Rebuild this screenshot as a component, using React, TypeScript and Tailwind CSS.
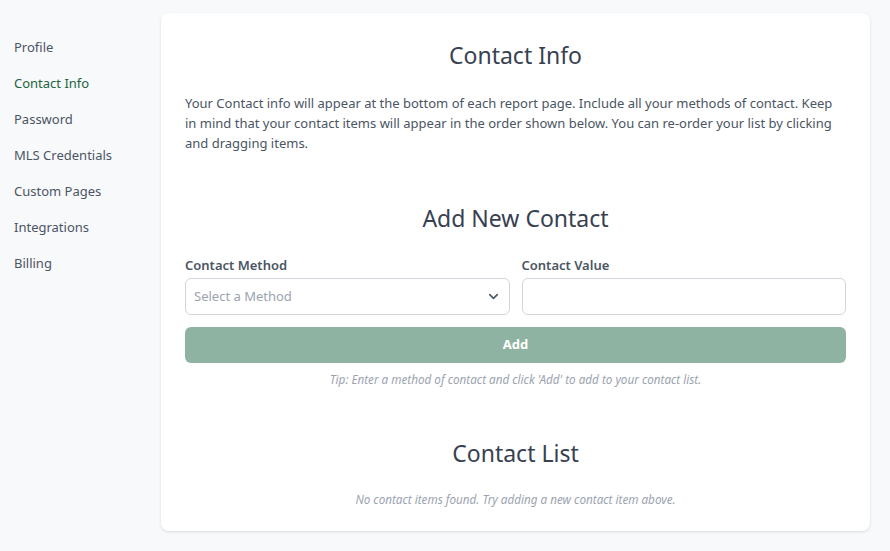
import { ChevronDown } from 'lucide-react';

const navItems = ['Profile', 'Contact Info', 'Password', 'MLS Credentials', 'Custom Pages', 'Integrations', 'Billing'];

const App = () => {
  return (
    <div className="min-h-[551px] bg-[#f8f9fb] flex font-['Noto_Sans',sans-serif] text-[#374151]">
      <aside className="w-[161px] shrink-0 pt-[30px] pl-[14px]">
        <ul className="flex flex-col">
          {navItems.map((item) => (
            <li key={item} className={`h-9 flex items-center text-[13px] ${item === 'Contact Info' ? 'text-[#23633f]' : 'text-[#4b5563]'}`}>
              {item}
            </li>
          ))}
        </ul>
      </aside>

      <main className="mt-[13px] mb-[20px] w-[709px] bg-white rounded-lg shadow-[0_1px_3px_rgba(0,0,0,0.12)] px-6 pt-[26px] pb-[17px]">
        <h1 className="text-center text-[23px] text-[#374151] leading-8">Contact Info</h1>
        <p className="mt-[22px] text-[13px] leading-5 text-[#4b5563]">
          Your Contact info will appear at the bottom of each report page. Include all your methods of contact. Keep in mind that your contact items will appear in the order shown below. You can re-order your list by clicking and dragging items.
        </p>

        <h2 className="mt-[49px] text-center text-[23px] text-[#374151] leading-8">Add New Contact</h2>
        <div className="mt-[21px] grid grid-cols-2 gap-3">
          <div>
            <label className="block text-[13px] font-semibold text-[#4b5563] leading-5 mb-[3px]">Contact Method</label>
            <div className="h-[37px] border border-[#d1d5db] rounded-md flex items-center justify-between px-2 text-[13px] text-[#9ca3af]">
              <span>Select a Method</span>
              <ChevronDown size={15} strokeWidth={2.5} className="text-[#4b5563]" />
            </div>
          </div>
          <div>
            <label className="block text-[13px] font-semibold text-[#4b5563] leading-5 mb-[3px]">Contact Value</label>
            <div className="h-[37px] border border-[#d1d5db] rounded-md" />
          </div>
        </div>
        <button className="mt-[12px] w-full h-[36px] rounded-md bg-[#8fb3a2] text-white text-[13px] font-bold">Add</button>
        <p className="mt-[8px] text-center text-[11.7px] italic text-[#9ca3af]">
          Tip: Enter a method of contact and click 'Add' to add to your contact list.
        </p>

        <h2 className="mt-[48px] text-center text-[23px] text-[#374151] leading-8">Contact List</h2>
        <p className="mt-[22px] text-center text-[11.7px] italic text-[#9ca3af]">
          No contact items found. Try adding a new contact item above.
        </p>
      </main>
    </div>
  );
};

export default App;
